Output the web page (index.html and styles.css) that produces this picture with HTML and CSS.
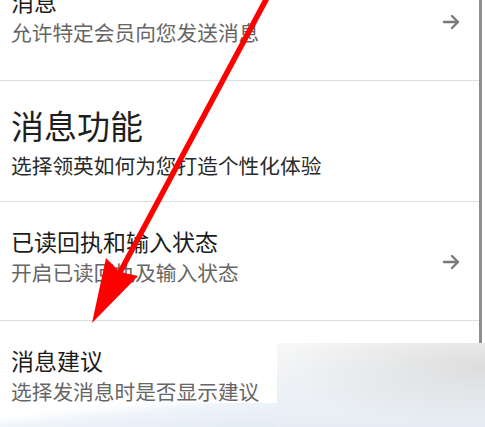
FILE: index.html
```html
<!DOCTYPE html>
<html>
<head>
  <meta charset="UTF-8">
  <link rel="stylesheet" href="styles.css">
</head>
<body>
  <div class="screen">
    <div class="settings-list">
      <div class="setting-item first">
        <div class="setting-text">
          <div class="setting-title">消息</div>
          <div class="setting-desc">允许特定会员向您发送消息</div>
        </div>
        <svg class="go-arrow" viewBox="0 0 20 20"><path d="M2 10h14M10 4l6 6-6 6"/></svg>
      </div>

      <div class="setting-item section">
        <div class="setting-text">
          <div class="section-title">消息功能</div>
          <div class="section-desc">选择领英如何为您打造个性化体验</div>
        </div>
      </div>

      <div class="setting-item">
        <div class="setting-text">
          <div class="setting-title">已读回执和输入状态</div>
          <div class="setting-desc">开启已读回执及输入状态</div>
        </div>
        <svg class="go-arrow" viewBox="0 0 20 20"><path d="M2 10h14M10 4l6 6-6 6"/></svg>
      </div>

      <div class="setting-item">
        <div class="setting-text">
          <div class="setting-title">消息建议</div>
          <div class="setting-desc">选择发消息时是否显示建议</div>
        </div>
      </div>
    </div>

    <div class="fade-right"></div>
    <div class="fade-bottom"></div>

    <svg class="mark" viewBox="0 0 485 427">
      <line x1="268" y1="-4" x2="118" y2="276" />
      <polygon points="92,323 106,258 120,272 138,276" />
    </svg>
  </div>
</body>
</html>
```

FILE: styles.css
```css
body {
  margin: 0;
  font-family: "Noto Sans CJK SC", "Noto Sans", sans-serif;
  background: #fff;
}
.screen {
  position: relative;
  width: 485px;
  height: 427px;
  overflow: hidden;
}
.settings-list {
  margin-top: -38px;
  margin-right: 3px;
  border-right: 3px solid #8f8f8f;
}
.setting-item {
  display: flex;
  align-items: center;
  justify-content: space-between;
  padding: 24px 17px 35px 11px;
  border-bottom: 1px solid #dedede;
}
.setting-item.section {
  padding-bottom: 23px;
}
.setting-title {
  font-size: 23px;
  line-height: 30px;
  color: #1c1c1c;
}
.setting-desc {
  margin-top: 3px;
  font-size: 20.7px;
  line-height: 26px;
  color: #666;
}
.section-title {
  font-size: 33px;
  line-height: 40px;
  color: #1f1f1f;
}
.section-desc {
  margin-top: 7px;
  font-size: 20.7px;
  line-height: 26px;
  color: #2a2a2a;
}
.go-arrow {
  width: 20px;
  height: 20px;
  margin-top: 12px;
  flex-shrink: 0;
}
.go-arrow path {
  fill: none;
  stroke: #7a7a7a;
  stroke-width: 2.4;
  stroke-linecap: round;
  stroke-linejoin: round;
}
.fade-right {
  position: absolute;
  right: 0;
  top: 343px;
  width: 208px;
  height: 84px;
  background:
    radial-gradient(ellipse at 100% 30%, rgba(215,215,215,0.8), rgba(235,238,241,0) 70%),
    linear-gradient(to bottom, #f7f7f7, #e6edf4);
}
.fade-bottom {
  position: absolute;
  left: 0;
  bottom: 0;
  width: 277px;
  height: 24px;
  background: linear-gradient(174deg, rgba(255,255,255,0) 25%, #edf3f9 50%, #e3ebf4);
}
.mark {
  position: absolute;
  left: 0;
  top: 0;
  width: 485px;
  height: 427px;
  pointer-events: none;
}
.mark line {
  stroke: #ff0000;
  stroke-width: 5.5;
}
.mark polygon {
  fill: #ff0000;
}
```
